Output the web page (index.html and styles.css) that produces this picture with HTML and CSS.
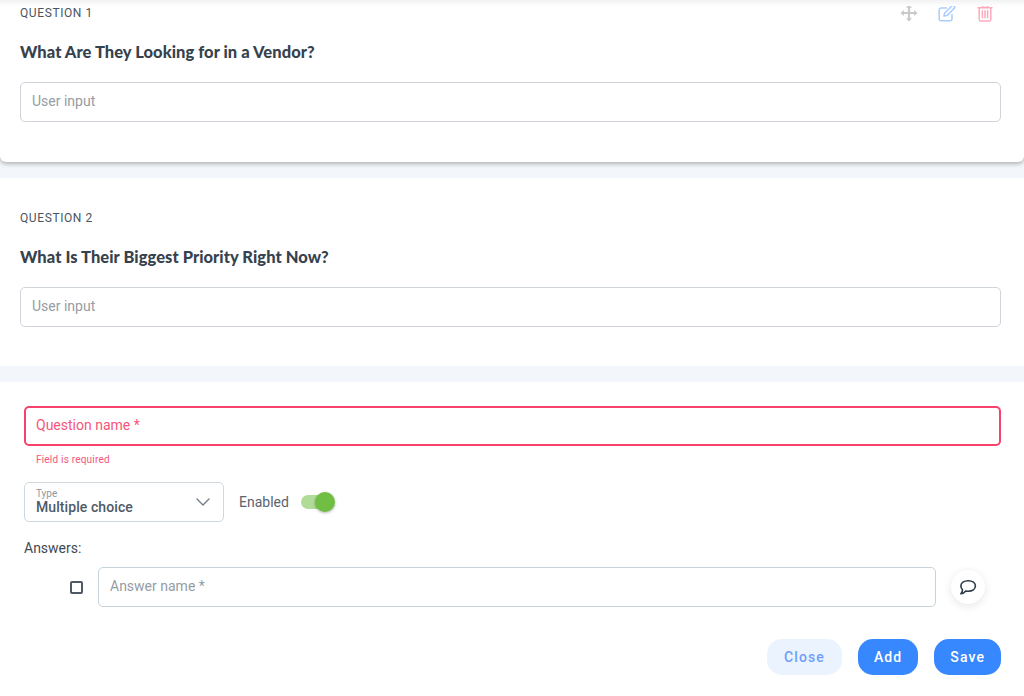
FILE: index.html
```html
<!DOCTYPE html>
<html lang="en">
<head>
<meta charset="UTF-8">
<title>Questions</title>
<link rel="stylesheet" href="styles.css">
</head>
<body>
<div class="top-shade"></div>
<div id="container">
  <div class="card card-active">
    <div class="card-head">
      <span class="label">QUESTION 1</span>
      <div class="tools">
        <svg class="tool" width="18" height="18" viewBox="0 0 18 18" fill="#c9c9c9">
          <path d="M9 0.5 L12 3.8 H10.1 V7.9 H14.2 V6 L17.5 9 L14.2 12 V10.1 H10.1 V14.2 H12 L9 17.5 L6 14.2 H7.9 V10.1 H3.8 V12 L0.5 9 L3.8 6 V7.9 H7.9 V3.8 H6 Z"/>
        </svg>
        <svg class="tool" width="18" height="18" viewBox="0 0 18 18" fill="none" stroke="#a9cdfd" stroke-width="1.5" stroke-linejoin="round" stroke-linecap="round">
          <path d="M14 10.5 V15 A1.8 1.8 0 0 1 12.2 16.8 H3 A1.8 1.8 0 0 1 1.2 15 V5.8 A1.8 1.8 0 0 1 3 4 H8.5"/>
          <path d="M6.5 9.2 L14 1.7 A1.2 1.2 0 0 1 15.8 1.7 L16.4 2.3 A1.2 1.2 0 0 1 16.4 4.1 L8.9 11.6 L6 12.1 Z"/>
        </svg>
        <svg class="tool" width="18" height="18" viewBox="0 0 18 18" fill="none" stroke="#fdaabd" stroke-width="1.5" stroke-linejoin="round" stroke-linecap="round">
          <path d="M2 3.8 H16"/>
          <path d="M6.2 3.6 L6.9 1.4 H11.1 L11.8 3.6"/>
          <path d="M3.2 3.8 V15.4 A1.6 1.6 0 0 0 4.8 17 H13.2 A1.6 1.6 0 0 0 14.8 15.4 V3.8"/>
          <path d="M6.4 6.8 V13.8 M9 6.8 V13.8 M11.6 6.8 V13.8"/>
        </svg>
      </div>
    </div>
    <h2>What Are They Looking for in a Vendor?</h2>
    <div class="input">User input</div>
  </div>

  <div class="card">
    <div class="card-head">
      <span class="label">QUESTION 2</span>
    </div>
    <h2>What Is Their Biggest Priority Right Now?</h2>
    <div class="input">User input</div>
  </div>

  <div class="form">
    <div class="input input-error">Question name *</div>
    <div class="error-text">Field is required</div>
    <div class="type-row">
      <div class="select">
        <div>
          <div class="select-label">Type</div>
          <div class="select-value">Multiple choice</div>
        </div>
        <svg width="14" height="8" viewBox="0 0 14 8" fill="none" stroke="#6f7a85" stroke-width="1.3" stroke-linecap="round" stroke-linejoin="round">
          <path d="M1 1 L7 7 L13 1"/>
        </svg>
      </div>
      <span class="switch-text">Enabled</span>
      <div class="switch"><div class="switch-knob"></div></div>
    </div>
    <div class="answers-title">Answers:</div>
    <div class="answer-row">
      <div class="check"></div>
      <div class="input answer-input">Answer name *</div>
      <div class="comment-btn">
        <svg width="18" height="17" viewBox="0 0 18 17" fill="none" stroke="#2b3a48" stroke-width="1.6" stroke-linejoin="round" stroke-linecap="round">
          <path d="M9.2 1.7 C13.4 1.7 16.4 3.9 16.4 7 C16.4 10.1 13.4 12.2 9.2 12.2 C8.3 12.2 7.5 12.1 6.8 11.9 C5.5 13.4 3.9 14.4 1.9 14.8 C3 13.6 3.5 12.4 3.5 10.8 C2.5 9.8 1.9 8.5 1.9 7 C1.9 3.9 5 1.7 9.2 1.7 Z"/>
        </svg>
      </div>
    </div>
    <div class="actions">
      <button class="btn btn-light">Close</button>
      <button class="btn">Add</button>
      <button class="btn">Save</button>
    </div>
  </div>
</div>
</body>
</html>
```

FILE: styles.css
```css
html, body {
  height: 100%;
}
body {
  margin: 0;
  height: 696px;
  overflow: hidden;
  background-color: #f3f7fb;
  color: #3a4651;
  font-family: Roboto, "Liberation Sans", sans-serif;
}
.top-shade {
  position: absolute;
  top: 0;
  left: 0;
  width: 100%;
  height: 6px;
  background: linear-gradient(#f1f1f1, #fff);
  z-index: 2;
}
#container {
  margin-top: -27px;
  display: flex;
  flex-direction: column;
  gap: 16px;
}
.card {
  background-color: #fff;
  padding: 32px 23px 40px 20px;
  height: 188px;
  box-sizing: border-box;
}
.card-active {
  height: 189px;
  border-radius: 0 0 6px 6px;
  box-shadow: 0 2px 4px rgba(0, 0, 0, 0.28);
}
.card-head {
  display: flex;
  justify-content: space-between;
  align-items: center;
  height: 16px;
}
.label {
  font-size: 12px;
  letter-spacing: 0.6px;
  color: #4a5560;
}
.tools {
  display: flex;
  gap: 20px;
  margin-right: 7px;
}
h2 {
  font-family: Lato, "Liberation Sans", sans-serif;
  font-size: 16.5px;
  font-weight: 900;
  letter-spacing: 0.05px;
  line-height: 20px;
  color: #36424d;
  margin: 21px 0 20px;
}
.input {
  height: 40px;
  box-sizing: border-box;
  border: 1px solid #ced4da;
  border-radius: 5px;
  padding: 0 11px 2px;
  display: flex;
  align-items: center;
  font-size: 14px;
  color: #959da4;
}
.form {
  background-color: #fff;
  height: 314px;
  box-sizing: border-box;
  padding: 24px 23px 0 24px;
}
.input-error {
  border: 2px solid #f6426d;
  color: #f6557c;
  padding: 0 10px 2px;
}
.error-text {
  font-size: 10px;
  letter-spacing: 0.2px;
  color: #f6557c;
  margin: 8px 0 0 12px;
  line-height: 12px;
}
.type-row {
  display: flex;
  align-items: center;
  margin-top: 16px;
}
.select {
  width: 200px;
  height: 40px;
  box-sizing: border-box;
  border: 1px solid #ced8de;
  border-radius: 5px;
  padding: 0 13px 0 11px;
  display: flex;
  justify-content: space-between;
  align-items: center;
}
.select-label {
  font-size: 10px;
  line-height: 10px;
  color: #8f979e;
}
.select-value {
  font-size: 14px;
  font-weight: 500;
  letter-spacing: 0.08px;
  line-height: 17px;
  color: #4f5a66;
}
.switch-text {
  font-size: 14px;
  color: #5a646e;
  margin-left: 15px;
}
.switch {
  position: relative;
  width: 32px;
  height: 14px;
  margin-left: 12px;
  border-radius: 7px;
  background-color: #b0dc98;
}
.switch-knob {
  position: absolute;
  top: -3px;
  right: -2px;
  width: 20px;
  height: 20px;
  border-radius: 50%;
  background-color: #70bf42;
  box-shadow: 0 1px 3px rgba(0, 0, 0, 0.3);
}
.answers-title {
  font-size: 14px;
  line-height: 16px;
  color: #3f4a55;
  margin-top: 18px;
}
.answer-row {
  display: flex;
  align-items: center;
  margin-top: 11px;
  padding-left: 46px;
}
.check {
  width: 9px;
  height: 9px;
  border: 2px solid #4f5a66;
  border-radius: 2px;
}
.answer-input {
  flex-grow: 1;
  margin-left: 15px;
  border-color: #c6d3da;
}
.comment-btn {
  width: 34px;
  height: 34px;
  margin: 0 16px 0 15px;
  border-radius: 50%;
  background-color: #fff;
  box-shadow: 0 2px 8px rgba(0, 0, 0, 0.1);
  display: flex;
  align-items: center;
  justify-content: center;
}
.actions {
  display: flex;
  justify-content: flex-end;
  gap: 16px;
  margin-top: 32px;
}
.btn {
  height: 36px;
  padding: 0 16px;
  border: none;
  border-radius: 15px;
  background-color: #3787ff;
  color: #fff;
  font-family: Roboto, "Liberation Sans", sans-serif;
  font-size: 14px;
  font-weight: 500;
  letter-spacing: 1.1px;
}
.btn-light {
  padding: 0 17px;
  background-color: #ebf3fe;
  color: #6f9ffa;
}
```
